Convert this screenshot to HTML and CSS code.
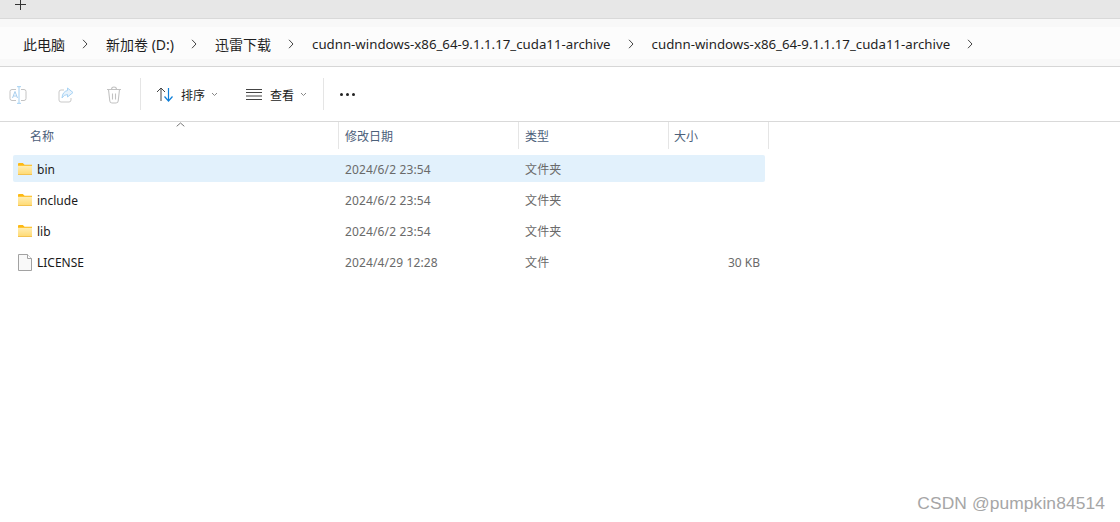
FILE: index.html
```html
<!DOCTYPE html>
<html lang="zh">
<head>
<meta charset="utf-8">
<title>cudnn-windows-x86_64-9.1.1.17_cuda11-archive</title>
<link rel="stylesheet" href="styles.css">
</head>
<body>
<div class="tabbar">
  <svg class="plus" width="11" height="11" viewBox="0 0 11 11"><path d="M5.500 0v11M0 5.500h11" stroke="#333" fill="none"/></svg>
</div>
<div class="addr">
  <nav class="crumbs">
    <span class="crumb">此电脑</span>
    <svg class="chev" width="6" height="10" viewBox="0 0 6 10"><path d="M1 .8 5 5 1 9.2" stroke="#444" fill="none"/></svg>
    <span class="crumb">新加卷 (D:)</span>
    <svg class="chev" width="6" height="10" viewBox="0 0 6 10"><path d="M1 .8 5 5 1 9.2" stroke="#444" fill="none"/></svg>
    <span class="crumb">迅雷下载</span>
    <svg class="chev" width="6" height="10" viewBox="0 0 6 10"><path d="M1 .8 5 5 1 9.2" stroke="#444" fill="none"/></svg>
    <span class="crumb latin">cudnn-windows-x86_64-9.1.1.17_cuda11-archive</span>
    <svg class="chev" width="6" height="10" viewBox="0 0 6 10"><path d="M1 .8 5 5 1 9.2" stroke="#444" fill="none"/></svg>
    <span class="crumb latin">cudnn-windows-x86_64-9.1.1.17_cuda11-archive</span>
    <svg class="chev" width="6" height="10" viewBox="0 0 6 10"><path d="M1 .8 5 5 1 9.2" stroke="#444" fill="none"/></svg>
  </nav>
</div>
<div class="toolbar">
  <svg class="tool t-rename" width="18" height="18" viewBox="0 0 18 18" fill="none">
    <path d="M7 3.500H3Q1 3.500 1 5.500V12.500Q1 14.500 3 14.500H7M12 3.500H15Q17 3.500 17 5.500V12.500Q17 14.500 15 14.500H12" stroke="#c4c4c4"/>
    <path d="M3.500 12 6 5.500 8.500 12M4.300 10H7.700" stroke="#a9cfee"/>
    <path d="M8 .7h4M8 17.300h4M10 .7v16.600" stroke="#a3d0f2"/>
  </svg>
  <svg class="tool t-share" width="16" height="16" viewBox="0 0 16 16" fill="none">
    <path d="M6 3H3Q1 3 1 5v8q0 2 2 2h8q2 0 2-2v-2" stroke="#c9c9c9"/>
    <path d="M9.500 1 15 5.500 9.500 10V7.500Q6 7.500 4 11 4.500 4.500 9.500 3.500Z" stroke="#a8d3f4" fill="#e8f3fc"/>
  </svg>
  <svg class="tool t-trash" width="16" height="18" viewBox="0 0 16 18" fill="none">
    <path d="M1 3.500h14M5.500 3.500Q5.500 1 8 1t2.500 2.500M2.500 3.500 3.800 15Q4 17 6 17h4q2 0 2.200-2l1.300-11.500M6.500 7.500v6M9.500 7.500v6" stroke="#c2c2c2" stroke-width="1.100"/>
  </svg>
  <span class="sep"></span>
  <button class="tbtn t-sort">
    <svg width="18" height="15" viewBox="0 0 18 15" fill="none">
      <path d="M1 5 5 1l4 4M5 1v13" stroke="#444"/>
      <path d="M8.500 9.500 12.500 14l4-4.500M12.500 14V1" stroke="#0f7fd8" stroke-width="1.200"/>
    </svg>
    <span class="tlabel">排序</span>
    <svg class="caret" width="7" height="5" viewBox="0 0 7 5"><path d="M1 1 3.500 3.500 6 1" stroke="#888" fill="none"/></svg>
  </button>
  <button class="tbtn t-view">
    <svg width="16" height="11" viewBox="0 0 16 11" fill="none"><path d="M0 .5h16M0 3.500h16M0 7h16M0 10.500h16" stroke="#444"/></svg>
    <span class="tlabel">查看</span>
    <svg class="caret" width="7" height="5" viewBox="0 0 7 5"><path d="M1 1 3.500 3.500 6 1" stroke="#888" fill="none"/></svg>
  </button>
  <span class="sep sep2"></span>
  <span class="more"><i></i><i></i><i></i></span>
</div>
<main class="list">
  <div class="head">
    <div class="hcell h-name">名称<svg class="sort" width="9" height="5" viewBox="0 0 9 5"><path d="M.7 4.300 4.500 1l3.800 3.300" stroke="#777" fill="none"/></svg></div>
    <div class="hcell">修改日期</div>
    <div class="hcell">类型</div>
    <div class="hcell h-size">大小</div>
  </div>
  <div class="rows">
    <div class="row selected">
      <div class="name"><svg class="ficon" width="14" height="12" viewBox="0 0 16 13" preserveAspectRatio="none"><use href="#folder"/></svg>bin</div>
      <div class="cell">2024/6/2 23:54</div><div class="cell">文件夹</div><div class="cell size"></div>
    </div>
    <div class="row">
      <div class="name"><svg class="ficon" width="14" height="12" viewBox="0 0 16 13" preserveAspectRatio="none"><use href="#folder"/></svg>include</div>
      <div class="cell">2024/6/2 23:54</div><div class="cell">文件夹</div><div class="cell size"></div>
    </div>
    <div class="row">
      <div class="name"><svg class="ficon" width="14" height="12" viewBox="0 0 16 13" preserveAspectRatio="none"><use href="#folder"/></svg>lib</div>
      <div class="cell">2024/6/2 23:54</div><div class="cell">文件夹</div><div class="cell size"></div>
    </div>
    <div class="row">
      <div class="name"><svg class="ficon" width="14" height="17" viewBox="0 0 14 17" fill="none"><path d="M.5.5h9l4 4v12H.5z" fill="#f9f9f9" stroke="#a2a2a2"/><path d="M9.500.5v4h4" fill="#fff" stroke="#a2a2a2"/></svg>LICENSE</div>
      <div class="cell">2024/4/29 12:28</div><div class="cell">文件</div><div class="cell size">30 KB</div>
    </div>
  </div>
</main>
<div class="watermark">CSDN @pumpkin84514</div>
<svg width="0" height="0" class="defs">
  <defs>
    <linearGradient id="fg" x1="0" y1="0" x2="0" y2="1"><stop offset="0" stop-color="#ffeeb5"/><stop offset="1" stop-color="#ffd96f"/></linearGradient>
    <symbol id="folder" viewBox="0 0 16 13" preserveAspectRatio="none">
      <path d="M0 1Q0 0 1 0h4.500L7.500 2H16v3H0z" fill="#fdb913"/>
      <path d="M0 3h16v10H0z" fill="url(#fg)"/>
      <path d="M0 12h16v1H0z" fill="#f2c04e"/>
    </symbol>
  </defs>
</svg>
</body>
</html>
```
FILE: styles.css
```css
* { box-sizing: border-box; }
html, body { margin: 0; padding: 0; }
body {
  width: 1120px;
  height: 522px;
  overflow: hidden;
  background: #fff;
  position: relative;
  color: #1a1a1a;
  font-family: "Noto Sans", "Noto Sans CJK SC", sans-serif;
}
.defs { position: absolute; }
.tabbar {
  height: 20px;
  background: #e7e7e7;
  border-bottom: 1px solid #d9d9d9;
  padding-left: 15px;
}
.plus { display: block; margin-top: -1px; }
.addr {
  height: 48px;
  background: #f8f8f8;
  border-bottom: 1px solid #d6d6d6;
  padding-top: 8px;
}
.crumbs {
  height: 32px;
  background: #fcfcfc;
  display: flex;
  align-items: center;
  padding: 1px 0 0 23px;
  font-size: 14px;
  color: #1f1f1f;
}
.crumb { white-space: nowrap; }
.latin { font-size: 13.260px; }
.chev { flex: none; margin: 0 18px 0 17px; }
.toolbar {
  height: 55px;
  border-bottom: 1px solid #d9d9d9;
  display: flex;
  align-items: center;
  padding: 1px 0 0 9px;
}
.tool { flex: none; }
.t-share { margin-left: 31px; }
.t-trash { margin-left: 32px; }
.sep { width: 1px; height: 32px; background: #e5e5e5; margin-left: 18px; margin-top: -1px; }
.tbtn {
  display: flex;
  align-items: center;
  border: 0;
  background: none;
  padding: 0;
  font: inherit;
  font-size: 12px;
  color: #1a1a1a;
}
.t-sort { margin-left: 15px; }
.t-view { margin-left: 28px; }
.t-sort .tlabel { margin-left: 7px; }
.t-view .tlabel { margin-left: 8px; }
.caret { margin-left: 6px; }
.sep2 { margin-left: 16px; }
.more { display: flex; gap: 3px; margin-left: 16px; }
.more i { width: 3px; height: 3px; border-radius: 50%; background: #222; }
.head {
  display: grid;
  grid-template-columns: 339px 180px 150px 100px;
  width: 769px;
  height: 27px;
  font-size: 12px;
  color: #4c607a;
}
.hcell {
  display: flex;
  align-items: center;
  padding-left: 6px;
  border-right: 1px solid #e5e5e5;
  position: relative;
}
.h-name { padding-left: 30px; }
.h-size { padding-left: 5px; }
.sort { position: absolute; left: 176px; top: 0; }
.rows { padding: 6px 0 0 13px; }
.row {
  display: grid;
  grid-template-columns: 326px 180px 150px 96px;
  width: 752px;
  height: 27px;
  margin-bottom: 4px;
  padding-top: 1px;
  align-items: center;
  border-radius: 2px;
  font-size: 12px;
  color: #6a6a6a;
}
.selected { background: #e2f1fc; }
.name {
  display: flex;
  align-items: center;
  padding-left: 5px;
  color: #1a1a1a;
}
.ficon { margin-right: 5px; flex: none; }
.cell { padding-left: 6px; letter-spacing: .14px; }
.size { text-align: right; padding-right: 5px; letter-spacing: 0; }
.watermark {
  position: absolute;
  right: 15px;
  top: 493px;
  font-family: "Liberation Sans", sans-serif;
  font-size: 17.400px;
  color: #a6a6a6;
  letter-spacing: .1px;
}
```
